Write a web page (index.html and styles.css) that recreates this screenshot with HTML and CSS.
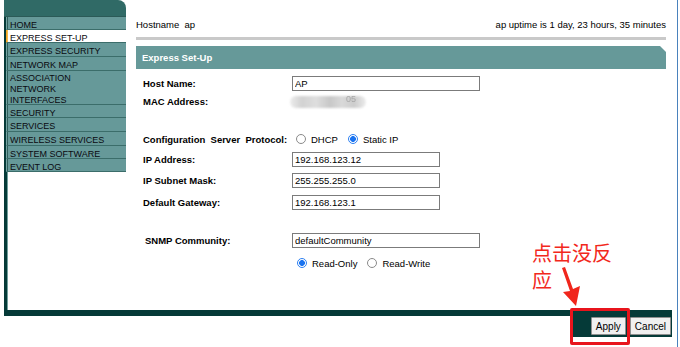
FILE: index.html
```html
<!DOCTYPE html>
<html>
<head>
<meta charset="utf-8">
<link rel="stylesheet" href="styles.css">
</head>
<body>
<div class="screen">
  <div class="frame">
    <div class="top">
      <aside class="side">
        <div class="side-head"></div>
        <ul class="menu">
          <li class="h13">HOME</li>
          <li class="h13 active">EXPRESS SET-UP</li>
          <li>EXPRESS SECURITY</li>
          <li>NETWORK MAP</li>
          <li class="assoc">ASSOCIATION</li>
          <li class="two">NETWORK<br>INTERFACES</li>
          <li class="h13">SECURITY</li>
          <li>SERVICES</li>
          <li>WIRELESS SERVICES</li>
          <li class="h13">SYSTEM SOFTWARE</li>
          <li class="h13">EVENT LOG</li>
        </ul>
        <div class="side-fill"></div>
      </aside>
      <main class="main">
        <div class="status">
          <span>Hostname&nbsp;&nbsp;ap</span>
          <span>ap uptime is 1 day, 23 hours, 35 minutes</span>
        </div>
        <div class="rule"></div>
        <div class="title">Express Set-Up</div>
        <div class="form">
          <div class="row r-host">
            <label class="lbl">Host Name:</label>
            <input class="txt wide" type="text" value="AP">
          </div>
          <div class="row r-mac">
            <label class="lbl">MAC Address:</label>
            <span class="mac"><span class="blob"></span><span class="mac-tail">05</span></span>
          </div>
          <div class="row r-proto">
            <label class="lbl">Configuration&nbsp; Server&nbsp; Protocol:</label>
            <span class="radios">
              <span class="radio"></span><span class="rtext">DHCP</span>
              <span class="radio on"></span><span class="rtext">Static IP</span>
            </span>
          </div>
          <div class="row r-ip">
            <label class="lbl">IP Address:</label>
            <input class="txt" type="text" value="192.168.123.12">
          </div>
          <div class="row">
            <label class="lbl">IP Subnet Mask:</label>
            <input class="txt" type="text" value="255.255.255.0">
          </div>
          <div class="row">
            <label class="lbl">Default Gateway:</label>
            <input class="txt" type="text" value="192.168.123.1">
          </div>
          <div class="row r-snmp">
            <label class="lbl snmp">SNMP Community:</label>
            <input class="txt wide" type="text" value="defaultCommunity">
          </div>
          <div class="row r-rw">
            <span class="lbl"></span>
            <span class="radios">
              <span class="radio on"></span><span class="rtext">Read-Only</span>
              <span class="radio"></span><span class="rtext">Read-Write</span>
            </span>
          </div>
        </div>
      </main>
    </div>
    <div class="footer">
      <div class="bar"></div>
      <div class="btnbox">
        <button class="btn">Apply</button>
        <button class="btn">Cancel</button>
      </div>
    </div>
  </div>

  <div class="note">点击没反应</div>
  <svg class="arrow" width="30" height="44" viewBox="0 0 30 44">
    <polygon points="2,1 5,0 13,22 20,19 16,39 3,25 10,24" fill="#f0261c"/>
  </svg>
  <div class="hl"></div>
</div>
</body>
</html>
```

FILE: styles.css
```css
* { box-sizing: border-box; }
html, body { margin: 0; padding: 0; background: #fff; }
body {
  font-family: "Liberation Sans", Arial, sans-serif;
  color: #000;
  width: 680px;
  height: 347px;
  overflow: hidden;
}
.screen {
  position: relative;
  width: 678px;
  height: 347px;
  border-right: 1px solid #4a82bd;
}
.frame {
  padding-left: 4px;
}
.top {
  display: flex;
  height: 310px;
}

/* sidebar */
.side {
  width: 122px;
  display: flex;
  flex-direction: column;
}
.side-head {
  height: 17px;
  background: #306a66;
  border-top-right-radius: 8px;
  border-bottom: 1px solid #2b5a57;
}
.menu {
  list-style: none;
  margin: 0;
  padding: 0;
  border-left: 2px solid #053a38;
}
.menu li {
  height: 14px;
  line-height: 13px;
  font-size: 9px;
  padding-top: 1.5px;
  padding-left: 3px;
  background: #669999;
  border-left: 1px solid #75a5a3;
  box-shadow: inset 1px 0 #2f5e5b;
  border-bottom: 1px solid #3b6d6a;
  white-space: nowrap;
  color: #0a0a10;
  overflow: hidden;
}
.menu li.h13 { height: 13px; line-height: 12px; }
.menu li.active {
  background: #fff;
  border-left-color: #f5a623;
  box-shadow: inset 1px 0 #f5b94a;
}
.menu li.assoc {
  height: 11px;
  line-height: 11px;
  border-bottom: none;
}
.menu li.two {
  height: 23px;
  line-height: 11px;
  padding-top: 1.5px;
}
.side-fill {
  flex: 1;
  border-left: 3px solid #053a38;
  box-shadow: inset 1px 0 #6f9f9c;
}

/* main */
.main {
  margin-left: 10px;
  width: 530px;
  padding-top: 19px;
  font-size: 9.5px;
}
.status {
  display: flex;
  justify-content: space-between;
  line-height: 12px;
  height: 12px;
}
.rule {
  margin-top: 6px;
  height: 3px;
  background: #c9c9c9;
}
.title {
  margin-top: 6px;
  height: 23px;
  line-height: 23px;
  padding-left: 6px;
  background: #669999;
  color: #fff;
  font-weight: bold;
  font-size: 9.5px;
  clip-path: polygon(0 0, 524px 0, 530px 6px, 530px 100%, 0 100%);
}
.form {
  padding-top: 4px;
}
.row {
  display: flex;
  align-items: center;
  height: 21.5px;
}
.r-mac { height: 14px; }
.r-proto { margin-top: 21px; height: 19px; }
.r-snmp { margin-top: 16.5px; }
.r-rw { height: 24px; }
.lbl {
  width: 156px;
  padding-left: 7px;
  font-weight: bold;
  white-space: nowrap;
}
.lbl.snmp { padding-left: 9px; }
.txt {
  width: 148px;
  height: 15px;
  border: 1px solid #7b7b7b;
  padding: 0 2px;
  font-family: "Liberation Sans", Arial, sans-serif;
  font-size: 9.5px;
  color: #000;
  background: #fff;
  outline: none;
}
.txt.wide { width: 188px; }

.mac {
  position: relative;
  display: inline-block;
  width: 76px;
  height: 12px;
  margin-left: -2px;
}
.blob {
  display: block;
  width: 76px;
  height: 12px;
  border-radius: 6px;
  background: linear-gradient(90deg, #ececec 0, #d2d2d2 12px, #dedede 26px, #c8c8c8 40px, #d9d9d9 52px, #cccccc 64px, #ececec 76px);
  filter: blur(1px);
}
.mac-tail {
  position: absolute;
  left: 56px;
  top: -2px;
  font-size: 9px;
  color: #a8a8a8;
  filter: blur(0.5px);
}

.radios {
  display: inline-flex;
  align-items: center;
  padding-left: 4px;
}
.radio {
  display: inline-block;
  width: 10px;
  height: 10px;
  border: 1px solid #8a8a8a;
  border-radius: 50%;
  background: #fff;
}
.radio.on {
  border-color: #2c7ff2;
  background: radial-gradient(circle, #1a73f0 0 2.6px, #fff 3.2px);
}
.rtext {
  margin-left: 5px;
  margin-right: 10px;
}
.r-rw .radios { padding-left: 5px; }

/* footer */
.footer {
  display: flex;
  align-items: flex-start;
  width: 668px;
}
.bar {
  flex: 1;
  height: 6px;
  background: #053a38;
}
.btnbox {
  background: #053a38;
  height: 27px;
  padding: 7px 1px 0 19px;
  display: flex;
  gap: 4px;
}
.btn {
  height: 18px;
  padding: 0 4px;
  font-family: "Liberation Sans", Arial, sans-serif;
  font-size: 10px;
  color: #000;
  background: #f0f0f0;
  border: 1px solid #8f8f8f;
  border-radius: 1px;
}

/* annotation overlays */
.note {
  position: absolute;
  left: 532px;
  top: 239px;
  width: 90px;
  font-family: "Noto Sans CJK SC", sans-serif;
  font-size: 20px;
  line-height: 27px;
  color: #f2281c;
}
.arrow {
  position: absolute;
  left: 560px;
  top: 267px;
}
.hl {
  position: absolute;
  left: 570px;
  top: 308px;
  width: 60px;
  height: 37px;
  border: 3px solid #e8141c;
  border-radius: 2px;
}
```
